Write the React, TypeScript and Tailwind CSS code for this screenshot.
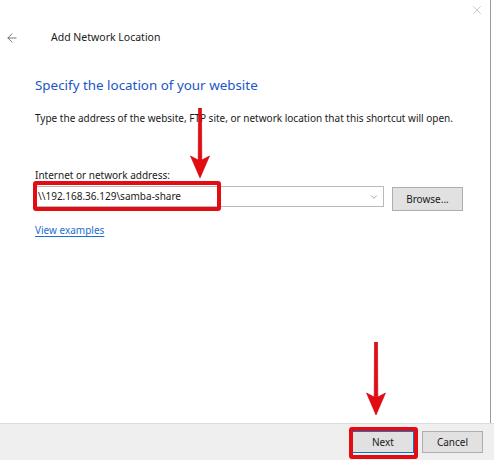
import { ArrowLeft, X, ChevronDown } from "lucide-react";

const font = { fontFamily: '"Noto Sans", "Open Sans", sans-serif' };

const DownArrow = ({ height }: { height: number }) => (
  <svg width="22" height={height} viewBox={`0 0 22 ${height}`}>
    <path
      d={`M9.5 0 L12.5 0 L12.8 ${height - 18} L20.5 ${height - 22} L11 ${height} L1.5 ${height - 22} L9.2 ${height - 18} Z`}
      fill="#e20c12"
      stroke="#c40008"
      strokeWidth="0.6"
      strokeLinejoin="round"
    />
  </svg>
);

export default function App() {
  return (
    <div
      className="relative w-[494px] h-[460px] bg-white flex flex-col overflow-hidden"
      style={font}
    >
      <div className="absolute top-0 right-[3px] w-px h-[423px] bg-[#9a9a9a]" />

      <div className="flex justify-end h-[24px] pr-[10px] pt-[3px]">
        <X className="w-[14px] h-[14px] text-[#b5b5b5]" strokeWidth={1.2} />
      </div>

      <div className="flex items-center h-[28px] pl-[5px]">
        <ArrowLeft className="w-[14px] h-[14px] text-[#5e5e5e]" strokeWidth={1.4} />
        <span className="ml-[32px] text-[10.5px] text-[#1a1a1a]">Add Network Location</span>
      </div>

      <div className="pl-[35px] pt-[24px]">
        <h1 className="text-[13.4px] leading-[18px] text-[#1c56c8]">
          Specify the location of your website
        </h1>
        <p className="mt-[17px] text-[10px] leading-[14px] text-[#1a1a1a]">
          Type the address of the website, FTP site, or network location that this shortcut will open.
        </p>

        <div className="mt-[43px] text-[10px] leading-[14px] text-[#1a1a1a]">
          Internet or network address:
        </div>
        <div className="flex items-start mt-[4px]">
          <div className="flex items-center justify-between w-[349px] h-[21px] border border-[#b9b9b9] bg-white pl-[2px] pr-[4px]">
            <span className="text-[10px] text-[#1a1a1a]">\\192.168.36.129\samba-share</span>
            <ChevronDown className="w-[10px] h-[10px] text-[#6e6e6e]" strokeWidth={1.5} />
          </div>
          <button className="ml-[8px] mt-[1px] w-[71px] h-[24px] bg-[#e1e1e1] border border-[#adadad] text-[10px] text-[#1a1a1a]">
            Browse...
          </button>
        </div>

        <a className="block mt-[12px] text-[10px] leading-[14px] text-[#1a6fcf] underline underline-offset-2">
          View examples
        </a>
      </div>

      <div className="mt-auto h-[37px] bg-[#efefef] border-t border-[#dcdcdc] flex items-center justify-end pr-[11px] gap-[8px]">
        <button className="w-[62px] h-[22px] bg-[#e1e1e1] border border-[#0078d7] text-[10px] text-[#1a1a1a]">
          Next
        </button>
        <button className="w-[61px] h-[22px] bg-[#e1e1e1] border border-[#adadad] text-[10px] text-[#1a1a1a]">
          Cancel
        </button>
      </div>

      {/* annotations */}
      <div className="absolute left-[33px] top-[181px] w-[188px] h-[30px] border-[4px] border-[#e20c12] rounded-[3px]" />
      <div className="absolute left-[189px] top-[108px]">
        <DownArrow height={70} />
      </div>
      <div className="absolute left-[349px] top-[427px] w-[69px] h-[32px] border-[4px] border-[#e20c12] rounded-[3px]" />
      <div className="absolute left-[365px] top-[342px]">
        <DownArrow height={73} />
      </div>
    </div>
  );
}
